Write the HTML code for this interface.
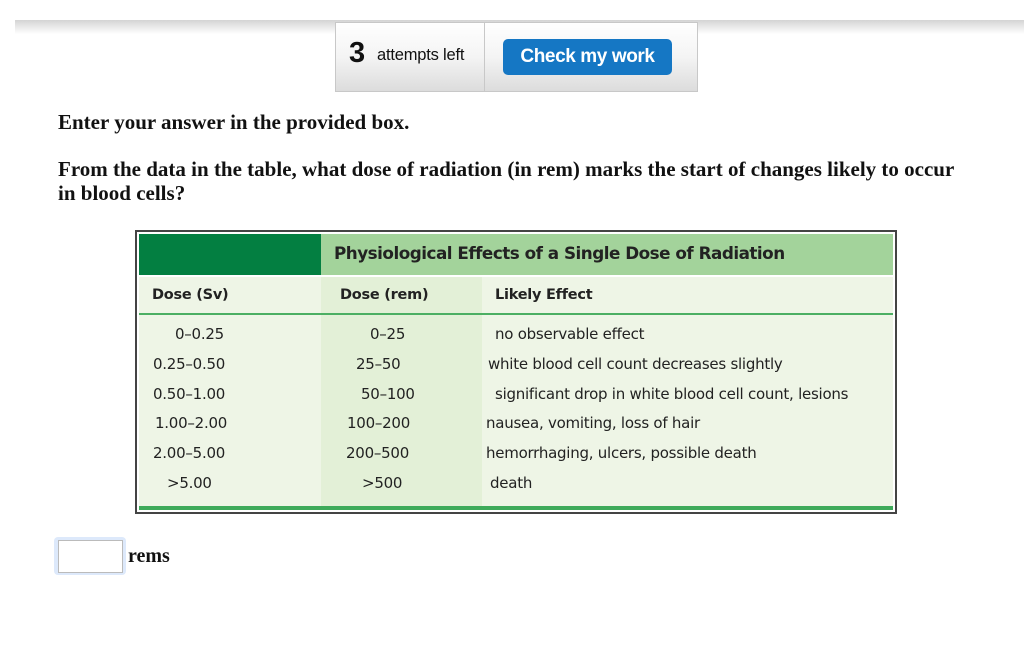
<!DOCTYPE html>
<html><head><meta charset="utf-8"><style>
body{margin:0;width:1024px;height:662px;background:#fff;position:relative;overflow:hidden;font-family:"Liberation Serif",serif}
.a{position:absolute}
.t{font-family:"DejaVu Sans","Liberation Sans",sans-serif;font-size:15px;color:#222;position:absolute;white-space:nowrap;letter-spacing:-0.25px}
</style></head><body>
<div class="a" style="left:15px;top:20px;width:1009px;height:14px;background:linear-gradient(#d4d4d4,#fff)"></div>
<div class="a" style="left:335px;top:22px;width:361px;height:68px;border:1px solid #c8c8c8;background:linear-gradient(#fff 0%,#f4f4f4 50%,#dcdcdc 100%)"></div>
<div class="a" style="left:484px;top:22px;width:1px;height:70px;background:#c8c8c8"></div>
<div class="a" style="left:349px;top:37px;font:bold 29px 'Liberation Sans',sans-serif;color:#111">3</div>
<div class="a" style="left:377px;top:46px;font:16.5px 'Liberation Sans',sans-serif;color:#111;letter-spacing:-0.2px">attempts left</div>
<div class="a" style="left:503px;top:39px;width:169px;height:36px;border-radius:5px;background:#1577c4;color:#fff;font:bold 19px 'Liberation Sans',sans-serif;text-align:center;line-height:35px;letter-spacing:-0.4px">Check my work</div>
<div class="a" style="left:58px;top:110px;font-weight:bold;font-size:21px;color:#111">Enter your answer in the provided box.</div>
<div class="a" style="left:58px;top:157px;font-weight:bold;font-size:21px;color:#111;line-height:24px;width:925px">From the data in the table, what dose of radiation (in rem) marks the start of changes likely to occur<br>in blood cells?</div>

<div class="a" style="left:135px;top:230px;width:758px;height:280px;border:2px solid #444;background:#fff"></div>
<div class="a" style="left:139px;top:234px;width:182px;height:41px;background:#037f41"></div>
<div class="a" style="left:321px;top:234px;width:572px;height:41px;background:#a3d39b"></div>
<div class="a" style="left:334px;top:243px;font:bold 16.8px 'DejaVu Sans',sans-serif;color:#222;letter-spacing:-0.5px">Physiological Effects of a Single Dose of Radiation</div>
<div class="a" style="left:139px;top:277px;width:754px;height:229px;background:#eef5e6"></div>
<div class="a" style="left:321px;top:277px;width:161px;height:229px;background:#e3f0d7"></div>
<div class="a" style="left:139px;top:313px;width:754px;height:2px;background:#4caf63"></div>
<div class="a" style="left:139px;top:506px;width:754px;height:4px;background:#3eaa5a"></div>
<div class="t" style="left:152px;top:287px;font-weight:bold;font-size:14.5px">Dose (Sv)</div>
<div class="t" style="left:340px;top:287px;font-weight:bold;font-size:14.5px">Dose (rem)</div>
<div class="t" style="left:495px;top:287px;font-weight:bold;font-size:14.5px">Likely Effect</div>

<div class="t" style="left:175px;top:325px">0–0.25</div><div class="t" style="left:370px;top:325px">0–25</div><div class="t" style="left:495px;top:325px">no observable effect</div>
<div class="t" style="left:153px;top:355px">0.25–0.50</div><div class="t" style="left:356px;top:355px">25–50</div><div class="t" style="left:488px;top:355px">white blood cell count decreases slightly</div>
<div class="t" style="left:153px;top:385px">0.50–1.00</div><div class="t" style="left:361px;top:385px">50–100</div><div class="t" style="left:495px;top:385px">significant drop in white blood cell count, lesions</div>
<div class="t" style="left:155px;top:414px">1.00–2.00</div><div class="t" style="left:347px;top:414px">100–200</div><div class="t" style="left:486px;top:414px">nausea, vomiting, loss of hair</div>
<div class="t" style="left:153px;top:444px">2.00–5.00</div><div class="t" style="left:346px;top:444px">200–500</div><div class="t" style="left:486px;top:444px">hemorrhaging, ulcers, possible death</div>
<div class="t" style="left:167px;top:474px">&gt;5.00</div><div class="t" style="left:362px;top:474px">&gt;500</div><div class="t" style="left:490px;top:474px">death</div>

<div class="a" style="left:54px;top:537px;width:72px;height:38px;border-radius:4px;background:#dde9fb"></div>
<div class="a" style="left:58px;top:540px;width:63px;height:31px;border:1px solid #bbb;background:#fff"></div>
<div class="a" style="left:128px;top:545px;font-weight:bold;font-size:20px;color:#111">rems</div>
</body></html>
